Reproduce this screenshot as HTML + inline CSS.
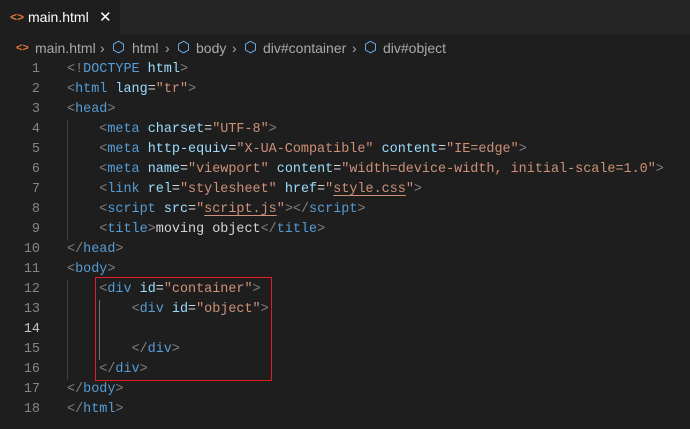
<!DOCTYPE html>
<html><head><style>
body{margin:0;width:690px;height:429px;background:#1e1e1e;overflow:hidden;font-family:"Liberation Sans",sans-serif}
.tabs{height:35px;background:#252526;position:relative}
.tab{position:absolute;left:0;top:0;width:120px;height:35px;background:#1e1e1e;color:#fff;font-size:14px;line-height:35px}
.bc{position:absolute;top:38px;left:0;height:20px;line-height:20px;font-size:14px;color:#a9a9a9;white-space:nowrap}
.code{position:absolute;top:60px;left:0;font-family:"Liberation Mono",monospace;font-size:13.45px;}
.l{height:20px;line-height:20px;white-space:pre;position:relative}
.n{position:absolute;left:0;width:40px;text-align:right;color:#858585}
.c{position:absolute;left:67px;color:#d4d4d4}
.p{color:#808080}.t{color:#569cd6}.a{color:#9cdcfe}.s{color:#ce9178}.u{text-decoration:underline;text-underline-offset:3px}
.g{position:absolute;width:1px;background:#404040}
.ic{position:absolute;color:#75beff;font-size:15px}
</style></head><body>
<div class="tabs"><div class="tab"><span style="position:absolute;left:10px;color:#e37933;font-size:12px;font-weight:bold">&lt;&gt;</span><span style="position:absolute;left:28px">main.html</span><span style="position:absolute;left:99px;font-size:15px">✕</span></div></div>
<div class="bc"><span style="position:absolute;left:16px;color:#e37933;font-size:11px;font-weight:bold">&lt;&gt;</span>
<span style="position:absolute;left:35px">main.html</span>
<span style="position:absolute;left:100px">›</span>
<span class="ic" style="left:112px">⬡</span><span style="position:absolute;left:132px">html</span>
<span style="position:absolute;left:165px">›</span>
<span class="ic" style="left:177px">⬡</span><span style="position:absolute;left:196px">body</span>
<span style="position:absolute;left:232px">›</span>
<span class="ic" style="left:244px">⬡</span><span style="position:absolute;left:263px">div#container</span>
<span style="position:absolute;left:352px">›</span>
<span class="ic" style="left:364px">⬡</span><span style="position:absolute;left:383px">div#object</span>
</div>
<div class="code">
<div class="l"><span class="n">1</span><span class="c"><span class="p">&lt;!</span><span class="t">DOCTYPE</span> <span class="a">html</span><span class="p">&gt;</span></span></div>
<div class="l"><span class="n">2</span><span class="c"><span class="p">&lt;</span><span class="t">html</span> <span class="a">lang</span>=<span class="s">"tr"</span><span class="p">&gt;</span></span></div>
<div class="l"><span class="n">3</span><span class="c"><span class="p">&lt;</span><span class="t">head</span><span class="p">&gt;</span></span></div>
<div class="l"><span class="n">4</span><span class="c">    <span class="p">&lt;</span><span class="t">meta</span> <span class="a">charset</span>=<span class="s">"UTF-8"</span><span class="p">&gt;</span></span></div>
<div class="l"><span class="n">5</span><span class="c">    <span class="p">&lt;</span><span class="t">meta</span> <span class="a">http-equiv</span>=<span class="s">"X-UA-Compatible"</span> <span class="a">content</span>=<span class="s">"IE=edge"</span><span class="p">&gt;</span></span></div>
<div class="l"><span class="n">6</span><span class="c">    <span class="p">&lt;</span><span class="t">meta</span> <span class="a">name</span>=<span class="s">"viewport"</span> <span class="a">content</span>=<span class="s">"width=device-width, initial-scale=1.0"</span><span class="p">&gt;</span></span></div>
<div class="l"><span class="n">7</span><span class="c">    <span class="p">&lt;</span><span class="t">link</span> <span class="a">rel</span>=<span class="s">"stylesheet"</span> <span class="a">href</span>=<span class="s">"<span class="u">style.css</span>"</span><span class="p">&gt;</span></span></div>
<div class="l"><span class="n">8</span><span class="c">    <span class="p">&lt;</span><span class="t">script</span> <span class="a">src</span>=<span class="s">"<span class="u">script.js</span>"</span><span class="p">&gt;&lt;/</span><span class="t">script</span><span class="p">&gt;</span></span></div>
<div class="l"><span class="n">9</span><span class="c">    <span class="p">&lt;</span><span class="t">title</span><span class="p">&gt;</span>moving object<span class="p">&lt;/</span><span class="t">title</span><span class="p">&gt;</span></span></div>
<div class="l"><span class="n">10</span><span class="c"><span class="p">&lt;/</span><span class="t">head</span><span class="p">&gt;</span></span></div>
<div class="l"><span class="n">11</span><span class="c"><span class="p">&lt;</span><span class="t">body</span><span class="p">&gt;</span></span></div>
<div class="l"><span class="n">12</span><span class="c">    <span class="p">&lt;</span><span class="t">div</span> <span class="a">id</span>=<span class="s">"container"</span><span class="p">&gt;</span></span></div>
<div class="l"><span class="n">13</span><span class="c">        <span class="p">&lt;</span><span class="t">div</span> <span class="a">id</span>=<span class="s">"object"</span><span class="p">&gt;</span></span></div>
<div class="l" style="border-top:1px solid #282828;border-bottom:1px solid #282828;height:18px;line-height:18px"><span class="n" style="color:#c6c6c6">14</span></div>
<div class="l"><span class="n">15</span><span class="c">        <span class="p">&lt;/</span><span class="t">div</span><span class="p">&gt;</span></span></div>
<div class="l"><span class="n">16</span><span class="c">    <span class="p">&lt;/</span><span class="t">div</span><span class="p">&gt;</span></span></div>
<div class="l"><span class="n">17</span><span class="c"><span class="p">&lt;/</span><span class="t">body</span><span class="p">&gt;</span></span></div>
<div class="l"><span class="n">18</span><span class="c"><span class="p">&lt;/</span><span class="t">html</span><span class="p">&gt;</span></span></div>
</div>
<div class="g" style="left:67px;top:120px;height:120px"></div>
<div class="g" style="left:67px;top:280px;height:100px"></div>
<div class="g" style="left:99px;top:300px;height:60px;background:#707070"></div>
<div style="position:absolute;left:95px;top:277px;width:175px;height:102px;border:1px solid #e51c23"></div>
</body></html>
